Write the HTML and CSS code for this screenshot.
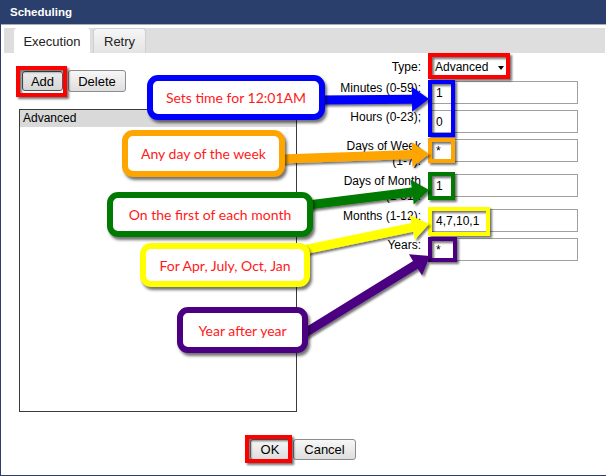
FILE: index.html
```html
<!DOCTYPE html>
<html>
<head>
<meta charset="utf-8">
<link rel="stylesheet" href="styles.css">
</head>
<body>
<div class="window">
  <div class="titlebar">Scheduling</div>
  <div class="frame">
    <div class="tabs">
      <div class="tab active">Execution</div>
      <div class="tab">Retry</div>
    </div>
    <div class="content">
      <div class="left">
        <div class="btnrow">
          <button class="btn pressed w-add">Add</button>
          <button class="btn w-del">Delete</button>
        </div>
        <div class="list">
          <div class="item selected">Advanced</div>
        </div>
      </div>
      <div class="right">
        <div class="row type">
          <div class="label">Type:</div>
          <div class="select"><span>Advanced</span><i class="caret"></i></div>
        </div>
        <div class="row">
          <div class="label">Minutes (0-59):</div>
          <input class="field" type="text" value="1">
        </div>
        <div class="row">
          <div class="label">Hours (0-23);</div>
          <input class="field" type="text" value="0">
        </div>
        <div class="row">
          <div class="label">Days of Week <span class="nw">(1-7):</span></div>
          <input class="field" type="text" value="*">
        </div>
        <div class="row">
          <div class="label">Days of Month <span class="nw">(1-31):</span></div>
          <input class="field" type="text" value="1">
        </div>
        <div class="row">
          <div class="label">Months (1-12):</div>
          <input class="field" type="text" value="4,7,10,1">
        </div>
        <div class="row">
          <div class="label">Years:</div>
          <input class="field" type="text" value="*">
        </div>
      </div>
    </div>
    <div class="footer">
      <button class="btn w-ok">OK</button>
      <button class="btn w-cancel">Cancel</button>
    </div>
  </div>
</div>

<div class="overlay">
  <svg class="marks" width="606" height="476" viewBox="0 0 606 476">
    <defs>
      <filter id="sh" x="-20%" y="-40%" width="150%" height="180%">
        <feDropShadow dx="2" dy="2" stdDeviation="1.2" flood-color="#000" flood-opacity="0.55"/>
      </filter>
    </defs>
    <g filter="url(#sh)" fill="none" stroke-width="4">
      <rect x="18" y="68" width="47" height="27" stroke="#ff0000"/>
      <rect x="430" y="55" width="78" height="22" stroke="#ff0000"/>
      <rect x="430" y="82" width="23" height="53" stroke="#0000ff"/>
      <rect x="430" y="140" width="23" height="21" stroke="#ffa500"/>
      <rect x="430" y="174" width="23" height="24" stroke="#007a00"/>
      <rect x="430" y="209" width="58" height="25" stroke="#ffff00"/>
      <rect x="430" y="239" width="25" height="21" stroke="#4b0082"/>
      <rect x="247" y="437" width="43" height="24" stroke="#ff0000"/>
    </g>
    <g filter="url(#sh)">
      <polygon fill="#0000ff" transform="translate(318,100) rotate(-0.52)" points="0,-4.5 94,-4.5 94,-12.5 111,0 94,12.5 94,4.5 0,4.5"/>
      <polygon fill="#ffa500" transform="translate(280,159) rotate(-1.92)" points="0,-4.5 132,-4.5 132,-12.5 149,0 132,12.5 132,4.5 0,4.5"/>
      <polygon fill="#007a00" transform="translate(308,205) rotate(-7.07)" points="0,-4.5 105,-4.5 105,-12.5 122,0 105,12.5 105,4.5 0,4.5"/>
      <polygon fill="#ffff00" transform="translate(303,250) rotate(-11.66)" points="0,-4.5 111.6,-4.5 111.6,-12.5 128.6,0 111.6,12.5 111.6,4.5 0,4.5"/>
      <polygon fill="#4b0082" transform="translate(300,336) rotate(-31.61)" points="0,-4.5 135.6,-4.5 135.6,-12.5 152.6,0 135.6,12.5 135.6,4.5 0,4.5"/>
    </g>
  </svg>
  <div class="callout c-blue">Sets time for 12:01AM</div>
  <div class="callout c-orange">Any day of the week</div>
  <div class="callout c-green">On the first of each month</div>
  <div class="callout c-yellow">For Apr, July, Oct, Jan</div>
  <div class="callout c-purple">Year after year</div>
</div>
</body>
</html>
```
FILE: styles.css
```css
* { box-sizing: border-box; }
html, body {
  margin: 0;
  padding: 0;
  width: 606px;
  height: 476px;
  overflow: hidden;
  background: #fff;
}
body {
  position: relative;
  font-family: "Liberation Sans", Arial, sans-serif;
  font-size: 12px;
  color: #000;
}
.window {
  width: 606px;
  height: 476px;
  border-left: 1px solid #2a3f6c;
  border-bottom: 1px solid #2a3f6c;
  display: flex;
  flex-direction: column;
}
.titlebar {
  height: 24px;
  margin-left: -1px;
  background: #2a3f6c;
  color: #fff;
  font-weight: bold;
  font-size: 11.5px;
  line-height: 25px;
  padding-left: 10px;
}
.frame {
  border-top: 1px solid #a9adb5;
  padding-top: 3px;
  flex: 1;
}
.tabs {
  margin: 0 1px 0 3px;
  height: 25px;
  background: #dedede;
  display: flex;
  align-items: flex-end;
  gap: 3px;
  padding-left: 10px;
}
.tab {
  height: 25px;
  padding: 0 10px;
  line-height: 25px;
  font-size: 13px;
  color: #222;
  border-radius: 4px 4px 0 0;
  background: linear-gradient(#f6f6f6, #e4e4e4);
  border: 1px solid #d0d0d0;
  border-bottom: none;
}
.tab.active {
  background: #fff;
  border-color: #fff;
  width: 76px;
  text-align: center;
  padding: 0;
}
.content {
  display: flex;
  align-items: flex-start;
}
.left {
  padding: 17px 0 0 18px;
  width: 296px;
}
.btnrow {
  display: flex;
  align-items: center;
  gap: 5px;
  padding-left: 3px;
  height: 22px;
}
.btn {
  font-family: "Liberation Sans", Arial, sans-serif;
  font-size: 13px;
  color: #000;
  height: 22px;
  padding: 0;
  border: 1px solid #8c8c8c;
  border-radius: 3px;
  background: linear-gradient(#f7f7f7, #dedede);
}
.btn.pressed {
  height: 20px;
  border-color: #555;
  background: linear-gradient(#ececec, #d6d6d6);
}
.w-add { width: 41px; }
.w-del { width: 58px; }
.w-ok { width: 40px; height: 21px; }
.w-cancel { width: 63px; height: 21px; }
.list {
  margin-top: 17px;
  width: 278px;
  height: 303px;
  border: 1px solid #3a3a3a;
}
.item {
  height: 17px;
  line-height: 17px;
  padding-left: 3px;
  font-size: 12px;
}
.item.selected { background: #d9d9d9; }
.right {
  margin-left: 24px;
  padding-top: 4px;
  display: flex;
  flex-direction: column;
  gap: 6px;
}
.row {
  display: flex;
  align-items: flex-start;
  gap: 9px;
}
.row.type { margin-bottom: -2px; }
.label {
  width: 100px;
  text-align: right;
  line-height: 14.5px;
  font-size: 12px;
}
.nw { white-space: nowrap; }
.row.type .label { line-height: 20px; }
.select {
  width: 78px;
  height: 20px;
  display: flex;
  align-items: center;
  justify-content: space-between;
  padding: 0 4px 0 5px;
  background: #fff;
  font-size: 12px;
}
.caret {
  display: block;
  width: 0;
  height: 0;
  border-left: 3.5px solid transparent;
  border-right: 3.5px solid transparent;
  border-top: 4px solid #000;
  margin-top: 2px;
}
.field {
  width: 148px;
  height: 23px;
  border: 1px solid #a0a0a0;
  padding: 0 5px;
  margin: 0;
  font-family: "Liberation Sans", Arial, sans-serif;
  font-size: 12px;
  color: #000;
  background: #fff;
  outline: none;
}
.footer {
  display: flex;
  justify-content: center;
  gap: 3px;
  padding-top: 27px;
  margin-left: -1px;
}
.overlay {
  position: absolute;
  left: 0;
  top: 0;
  width: 606px;
  height: 476px;
  pointer-events: none;
}
.marks {
  position: absolute;
  left: 0;
  top: 0;
}
.callout {
  position: absolute;
  display: flex;
  align-items: center;
  justify-content: center;
  background: #fff;
  border: 6px solid;
  border-radius: 11px;
  box-shadow: 2px 3px 3px rgba(0, 0, 0, 0.55);
  color: #ff1a1a;
  font-family: Lato, "Open Sans", sans-serif;
  font-size: 14px;
  white-space: nowrap;
}
.c-blue { left: 147px; top: 75px; width: 178px; height: 45px; border-color: #0000ff; }
.c-orange { left: 122px; top: 130px; width: 163px; height: 47px; border-color: #ffa500; }
.c-green { left: 107px; top: 192px; width: 206px; height: 45px; border-color: #007a00; }
.c-yellow { left: 140px; top: 243px; width: 170px; height: 44px; border-color: #ffff00; }
.c-purple { left: 177px; top: 307px; width: 131px; height: 46px; border-color: #4b0082; }
```
